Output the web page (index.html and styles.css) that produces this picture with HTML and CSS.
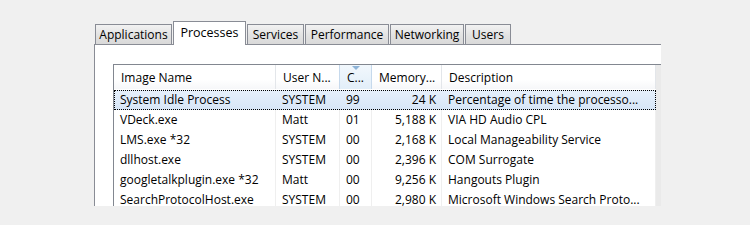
FILE: index.html
```html
<!DOCTYPE html>
<html>
<head>
<meta charset="utf-8">
<link rel="stylesheet" href="styles.css">
</head>
<body>
<div class="window">
  <div class="tabs">
    <div class="tab t-app">Applications</div>
    <div class="tab t-proc active">Processes</div>
    <div class="tab t-svc">Services</div>
    <div class="tab t-perf">Performance</div>
    <div class="tab t-net">Networking</div>
    <div class="tab t-users">Users</div>
  </div>
  <div class="panel">
    <div class="list">
      <div class="row head">
        <div class="cell">Image Name</div>
        <div class="cell">User N...</div>
        <div class="cell sorted"><span class="arrow"></span>C...</div>
        <div class="cell">Memory...</div>
        <div class="cell">Description</div>
      </div>
      <div class="row selected">
        <div class="cell">System Idle Process</div>
        <div class="cell">SYSTEM</div>
        <div class="cell">99</div>
        <div class="cell num">24 K</div>
        <div class="cell">Percentage of time the processo...</div>
      </div>
      <div class="row">
        <div class="cell">VDeck.exe</div>
        <div class="cell">Matt</div>
        <div class="cell">01</div>
        <div class="cell num">5,188 K</div>
        <div class="cell">VIA HD Audio CPL</div>
      </div>
      <div class="row">
        <div class="cell">LMS.exe *32</div>
        <div class="cell">SYSTEM</div>
        <div class="cell">00</div>
        <div class="cell num">2,168 K</div>
        <div class="cell">Local Manageability Service</div>
      </div>
      <div class="row">
        <div class="cell">dllhost.exe</div>
        <div class="cell">SYSTEM</div>
        <div class="cell">00</div>
        <div class="cell num">2,396 K</div>
        <div class="cell">COM Surrogate</div>
      </div>
      <div class="row">
        <div class="cell">googletalkplugin.exe *32</div>
        <div class="cell">Matt</div>
        <div class="cell">00</div>
        <div class="cell num">9,256 K</div>
        <div class="cell">Hangouts Plugin</div>
      </div>
      <div class="row">
        <div class="cell">SearchProtocolHost.exe</div>
        <div class="cell">SYSTEM</div>
        <div class="cell">00</div>
        <div class="cell num">2,980 K</div>
        <div class="cell">Microsoft Windows Search Proto...</div>
      </div>
    </div>
  </div>
</div>
</body>
</html>
```

FILE: styles.css
```css
html, body {
  margin: 0;
  padding: 0;
  background: #f0f0f0;
  font-family: "Open Sans", "Liberation Sans", Arial, sans-serif;
  font-size: 12px;
  color: #000;
}

.window {
  margin-left: 94px;
  padding-top: 21px;
  width: 567px;
}

.tabs {
  display: flex;
  align-items: flex-end;
  height: 23px;
  padding-left: 1px;
  gap: 1px;
}

.tab {
  box-sizing: border-box;
  height: 20px;
  padding-top: 1px;
  line-height: 18px;
  text-align: center;
  border: 1px solid #898c95;
  border-bottom: none;
  background: linear-gradient(#f2f2f2, #e3e3e3 50%, #d9d9d9);
  font-size: 12px;
}

.tab.active {
  height: 24px;
  padding-top: 1px;
  line-height: 20px;
  background: #fff;
  margin-bottom: -1px;
  position: relative;
  z-index: 1;
  font-size: 12.5px;
}

.t-app { width: 77px; }
.t-proc { width: 73px; }
.t-svc { width: 57px; }
.t-perf { width: 84px; }
.t-net { width: 74px; }
.t-users { width: 46px; }

.panel {
  background: #fff;
  border-top: 1px solid #898c95;
  border-left: 1px solid #898c95;
  height: 162px;
  padding: 19px 0 0 18px;
  box-sizing: border-box;
}

.list {
  border-top: 1px solid #828790;
  border-left: 1px solid #828790;
  height: 143px;
  overflow: hidden;
  width: 547px;
  background: linear-gradient(to right, #fff 542px, #eaeaea 542px);
}

.row {
  display: grid;
  grid-template-columns: 162px 64px 32px 70px 214px;
  height: 20px;
  line-height: 20px;
  background: #fff;
  width: 542px;
}

.row.head {
  height: 24px;
  line-height: 22px;
  margin-bottom: 1px;
  background: linear-gradient(#fff 60%, #f6f7f9);
}

.row.head .cell {
  padding-top: 2px;
}

.cell {
  padding: 0 6px;
  white-space: nowrap;
  overflow: hidden;
  border-right: 1px solid #efefef;
}

.head .cell {
  border-right: 1px solid #e3e6ea;
  padding-left: 7px;
}

.head .cell.sorted {
  background: linear-gradient(#f2f8fd, #e2eef9);
  border-right-color: #c6d9ec;
  border-left: 1px solid #c6d9ec;
  margin-left: -1px;
  position: relative;
}

.arrow {
  position: absolute;
  top: 1px;
  left: 50%;
  margin-left: -4px;
  width: 0;
  height: 0;
  border-left: 4px solid transparent;
  border-right: 4px solid transparent;
  border-top: 4px solid #8eb4d8;
}

.cell.num {
  text-align: right;
  padding-right: 5px;
}

.row.selected {
  background: linear-gradient(#e6f0fb, #d7e6f7);
  outline: 1px dotted #000;
  outline-offset: -1px;
}

.row.selected .cell {
  border-right-color: transparent;
}
```
